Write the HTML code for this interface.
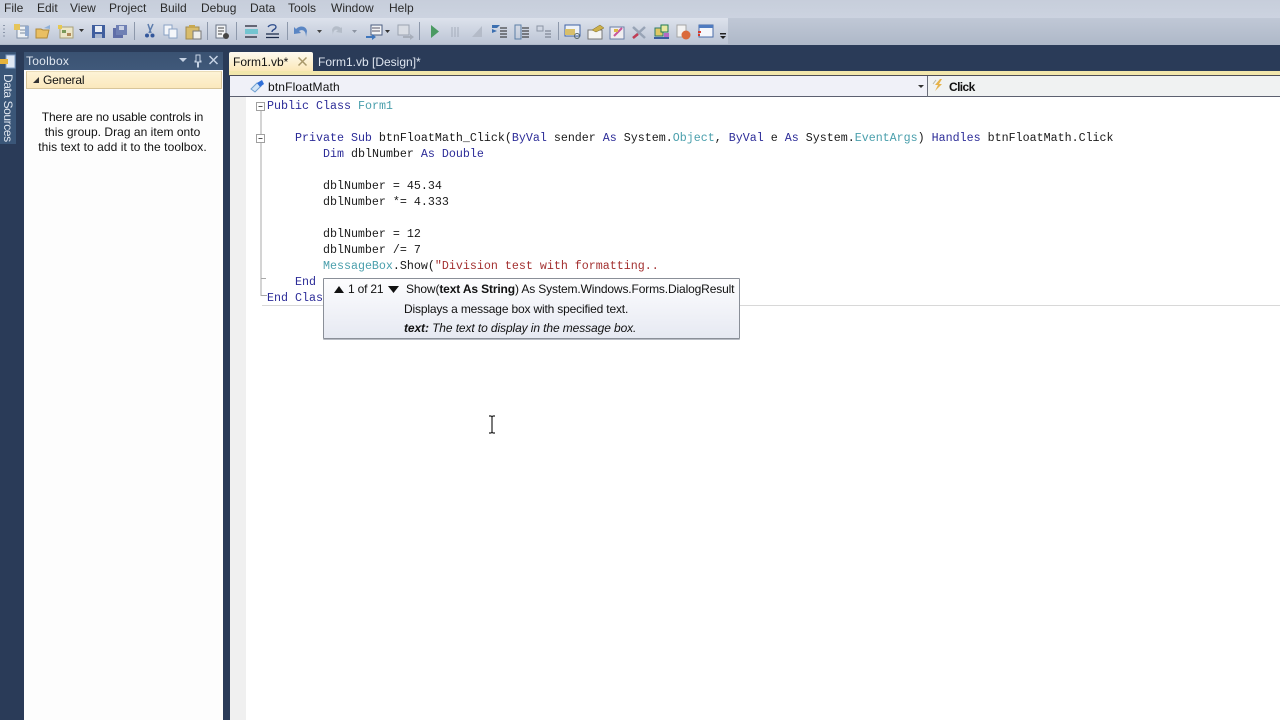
<!DOCTYPE html>
<html><head><meta charset="utf-8">
<style>
html,body{margin:0;padding:0}
body{width:1280px;height:720px;overflow:hidden;position:relative;background:#2a3b58;font-family:"Liberation Sans",sans-serif;font-size:12px;color:#111}
.a{position:absolute;white-space:nowrap}
#menu{left:0;top:0;width:1280px;height:18px;background:linear-gradient(#c7cedb,#ccd3e0)}
#tbrow{left:0;top:18px;width:1280px;height:27px;background:linear-gradient(#c0c8d6,#aeb8c8)}
#tb{left:0;top:18px;width:728px;height:26px;background:linear-gradient(#dde2ec,#bcc5d5)}
.m{top:1px;font-size:12px;color:#2a2a2a;line-height:14px}
.sep{top:22px;width:1px;height:18px;background:#8d98ab}
svg{position:absolute;overflow:visible}
#code{left:267px;top:98px;font:11.67px/16px "Liberation Mono",monospace;color:#1a1a1a;white-space:pre}
.k{color:#2c2c98}.t{color:#4a9fac}.s{color:#a33030}
</style></head><body>
<div class="a" id="menu"></div>
<div class="a" id="tbrow"></div>
<div class="a" id="tb"></div>
<div class="a m" style="left:4px">File</div>
<div class="a m" style="left:37px">Edit</div>
<div class="a m" style="left:70px">View</div>
<div class="a m" style="left:109px">Project</div>
<div class="a m" style="left:160px">Build</div>
<div class="a m" style="left:201px">Debug</div>
<div class="a m" style="left:250px">Data</div>
<div class="a m" style="left:288px">Tools</div>
<div class="a m" style="left:331px">Window</div>
<div class="a m" style="left:389px">Help</div>

<svg style="left:0;top:18px" width="728" height="26" viewBox="0 18 728 26">
<path d="M4 25v1M4 28.500v1M4 32v1M4 35.500v1" stroke="#6d7a90" stroke-width="1.400"/>
<rect x="17" y="26" width="11" height="12" fill="#eef1f4" stroke="#7f90a8"/><path d="M20 30h6M20 33h6" stroke="#7a8aa0"/><rect x="14" y="24" width="6" height="6" fill="#e5c45a"/><rect x="25" y="26" width="4" height="10" fill="#8fa9cf"/>
<path d="M36 29h5l2 1h6l-2 8H36z" fill="#e9bf62" stroke="#b08a3a"/><path d="M44 28l6-3v4z" fill="#8fb0d8"/>
<rect x="60" y="27" width="13" height="11" fill="#ece6c8" stroke="#a8a078"/><rect x="62" y="30" width="4" height="3" fill="#7a9a5a"/><rect x="67" y="33" width="4" height="3" fill="#b08a5a"/><rect x="58" y="25" width="4" height="4" fill="#e6c850"/>
<path d="M79 29h5l-2.500 3z" fill="#333"/>
<rect x="92" y="25" width="13" height="13" fill="#3f5e9e"/><rect x="95" y="26" width="7" height="6" fill="#e8edf5"/><rect x="95" y="34" width="7" height="4" fill="#aab8d0"/>
<rect x="113" y="28" width="10" height="10" fill="#5f6ea8"/><rect x="116" y="25" width="11" height="10" fill="#6f80b4"/><rect x="119" y="26" width="5" height="4" fill="#c8d0e4"/>
<path d="M148 24l3 9M153 24l-4 9" stroke="#5c7cac" stroke-width="1.500"/><circle cx="147" cy="35.500" r="2" fill="#34589c"/><circle cx="152.500" cy="35.500" r="2" fill="#34589c"/>
<rect x="164" y="25" width="8" height="10" fill="#f4f6fa" stroke="#8aa2c4"/><rect x="169" y="29" width="8" height="9" fill="#f4f6fa" stroke="#8aa2c4"/>
<rect x="186" y="27" width="13" height="12" fill="#d8bc6c" stroke="#a08a50"/><rect x="193" y="31" width="8" height="8" fill="#eeeeea" stroke="#777"/><rect x="189" y="25" width="6" height="3" fill="#c8a850"/>
<rect x="216" y="25" width="10" height="13" fill="#f2f4f6" stroke="#6a7486"/><path d="M218 28h6M218 31h6M218 34h4" stroke="#444"/><circle cx="226" cy="36" r="3" fill="#444"/>
<path d="M245 26h12M245 37h12" stroke="#223" stroke-width="1.300"/><path d="M245 29h13v5h-13z" fill="#5cc0cc" opacity=".8"/>
<path d="M268 27c2-3 8-3 8 0 0 3-4 2-4 5" fill="none" stroke="#2a4a8a" stroke-width="1.300"/><path d="M266 34h13M266 37.500h13" stroke="#1a2a48" stroke-width="1.300"/>
<path d="M296 29c4-4 10-3 11 2l-1 6c0-7-4-8-7-6l2 2-7 1 0-7z" fill="#5a86c4"/>
<path d="M317 30h5l-2.500 3z" fill="#444"/>
<path d="M341 28c-4-3-8-2-9 2l1 5c0-5 3-6 5-5l-2 2 6 1 0-6z" fill="#b4bcc8"/>
<path d="M352 30h5l-2.500 3z" fill="#8c94a2"/>
<rect x="371" y="25" width="11" height="10" fill="#f2f3f5" stroke="#4a5c80"/><path d="M372 28h8M372 31h8" stroke="#556"/><path d="M366 36h6v-2l4 3-4 3v-2h-6z" fill="#3f76bc"/>
<path d="M385 30h5l-2.500 3z" fill="#333"/>
<rect x="398" y="25" width="11" height="10" fill="#d9dde4" stroke="#9ba3b0"/><path d="M403 36h7v-2l4 3-4 3v-2h-7z" fill="#a7aeba"/>
<path d="M431 25v13l8-6.500z" fill="#4a9a62"/>
<path d="M452 27v10M455 27v10M458 27v10" stroke="#a4acba"/>
<path d="M482 26v11h-10z" fill="#b4bbc8"/>
<path d="M492 25h8l-3 3h-5zM492 29l5 2-5 2z" fill="#3c6fb0"/><path d="M500 28h7M500 31h7M500 34h7M500 37h7" stroke="#222"/>
<path d="M515 25h6v14h-6z" fill="none" stroke="#5b7ea6"/><path d="M522 28h7M522 31h7M522 34h7M522 37h7" stroke="#222"/>
<path d="M537 26h6v5h-6z" fill="none" stroke="#8b94a4"/><path d="M545 31h6M545 34h6M545 37h6" stroke="#6c7483"/>
<rect x="565" y="25" width="15" height="11" fill="#eef2f8" stroke="#3f62a4"/><rect x="565" y="29" width="10" height="6" fill="#d8bf6a"/><circle cx="577" cy="36" r="2.500" fill="none" stroke="#566"/>
<rect x="588" y="30" width="14" height="9" fill="#f4f4f4" stroke="#777"/><path d="M592 30l8-5 4 3-8 4z" fill="#cdb04a" stroke="#7a6a2a" stroke-width=".5"/>
<rect x="610" y="27" width="14" height="12" fill="#f0eef0" stroke="#6a7fa8"/><path d="M614 36l8-8" stroke="#c8569a" stroke-width="2"/><rect x="614" y="29" width="4" height="3" fill="#dcb84a"/>
<path d="M633 27l12 11M645 27l-12 11" stroke="#98a4b6" stroke-width="2.500"/><path d="M633 38l5-4" stroke="#c23d55" stroke-width="2.500"/>
<rect x="655" y="28" width="8" height="8" fill="#dfc864" stroke="#2c7a6a"/><rect x="661" y="25" width="7" height="7" fill="#e8e8a0" stroke="#1f7a50"/><rect x="664" y="33" width="5" height="4" fill="#b66bc4"/><rect x="654" y="37" width="15" height="2" fill="#3a5ea0"/>
<rect x="677" y="25" width="9" height="12" fill="#f3f3f3" stroke="#a5a5a5"/><circle cx="686" cy="35" r="4.500" fill="#da6a3c"/>
<rect x="699" y="25" width="14" height="12" fill="#f4f6fb" stroke="#4a6ca8"/><rect x="699" y="25" width="14" height="3" fill="#4f7bc0"/><path d="M698 32h3M698 35h2" stroke="#d63a2a" stroke-width="2"/>
<rect x="720" y="33" width="6" height="1.500" fill="#222"/><path d="M720 36h6l-3 3z" fill="#222"/>
</svg>
<div class="a sep" style="left:134px"></div><div class="a sep" style="left:207px"></div><div class="a sep" style="left:236px"></div><div class="a sep" style="left:287px"></div><div class="a sep" style="left:419px"></div><div class="a sep" style="left:558px"></div>

<!-- left strip -->
<div class="a" style="left:0;top:52px;width:16px;height:92px;background:#3a5678"></div>
<svg style="left:0;top:54px" width="16" height="16"><rect x="6" y="1" width="9" height="13" fill="#dfe8f4" stroke="#7f9cc4"/><rect x="0" y="5" width="8" height="5" fill="#e6b33c"/></svg>
<div class="a" style="left:0;top:74px;width:15px;color:#dfe6f0;font-size:12px;line-height:15px;writing-mode:vertical-rl;letter-spacing:-.42px">Data Sources</div>

<!-- toolbox -->
<div class="a" style="left:24px;top:52px;width:199px;height:19px;background:linear-gradient(#3a5272,#40597a)"></div>
<div class="a" style="left:26px;top:54px;color:#dfe6f0;font-size:12px;line-height:15px;letter-spacing:.25px">Toolbox</div>
<svg style="left:175px;top:52px" width="48" height="18">
<path d="M4 6h8l-4 4z" fill="#c5d2e4"/>
<path d="M21 3h4v6h1v1h-2.500v5h-1v-5H20V9h1z" fill="none" stroke="#c5d2e4"/>
<path d="M34.500 4l8 8M42.500 4l-8 8" stroke="#c5d2e4" stroke-width="1.500"/>
</svg>
<div class="a" style="left:24px;top:70px;width:199px;height:650px;background:#fdfdfd"></div>
<div class="a" style="left:26px;top:71px;width:194px;height:16px;background:linear-gradient(#fdf3d6,#fbe8bd);border:1px solid #d8c59a;border-top-color:#eadcb8"></div>
<svg style="left:33px;top:76px" width="8" height="8"><path d="M6 1v6H0z" fill="#333"/></svg>
<div class="a" style="left:43px;top:73px;font-size:12px;line-height:14px;color:#111;letter-spacing:-.2px">General</div>
<div class="a" style="left:24px;top:110px;width:197px;text-align:center;font-size:12px;line-height:15px;color:#111"><span style="letter-spacing:-.13px">There are no usable controls in</span><br><span style="letter-spacing:.03px">this group. Drag an item onto</span><br><span style="letter-spacing:.07px">this text to add it to the toolbox.</span></div>

<!-- doc -->
<div class="a" style="left:229px;top:52px;width:84px;height:20px;background:linear-gradient(#fdfaf0,#fbe7b4);border-radius:2px 2px 0 0"></div>
<div class="a" style="left:233px;top:55px;font-size:12px;line-height:15px;color:#111">Form1.vb*</div>
<svg style="left:297px;top:56px" width="11" height="11"><path d="M1.500 1.500l8 8M9.500 1.500l-8 8" stroke="#a8986a" stroke-width="1.500"/></svg>
<div class="a" style="left:318px;top:55px;font-size:12px;line-height:15px;color:#dfe6f0">Form1.vb [Design]*</div>
<div class="a" style="left:229px;top:71px;width:1051px;height:4px;background:#f2e7ac"></div>
<div class="a" style="left:229px;top:75px;width:1051px;height:1px;background:#4e4e58"></div>
<div class="a" style="left:230px;top:76px;width:1050px;height:21px;background:#f0f1f8"></div>
<div class="a" style="left:230px;top:96px;width:1050px;height:1px;background:#5c6070"></div>
<div class="a" style="left:927px;top:76px;width:1px;height:21px;background:#6a6e7a"></div>
<div class="a" style="left:928px;top:76px;width:352px;height:20px;background:#f0f2f2"></div>
<svg style="left:250px;top:79px" width="16" height="15"><path d="M1 10l6-6 4 3-6 6z" fill="#d2e4f6" stroke="#6f9fd0"/><path d="M7 4l5-3 2 4-4 3z" fill="#2f6fd8"/></svg>
<div class="a" style="left:268px;top:80px;font-size:12px;line-height:15px;color:#111;letter-spacing:.15px">btnFloatMath</div>
<svg style="left:918px;top:85px" width="6" height="4"><path d="M0 0h6L3 3z" fill="#333"/></svg>
<svg style="left:932px;top:79px" width="12" height="14"><path d="M8 0L3 6h3l-3 6 7-7H7l3-5z" fill="#e6b34a"/><path d="M4 1l-3 4" stroke="#b9b9a6"/></svg>
<div class="a" style="left:949px;top:80px;font-size:12px;font-weight:bold;line-height:15px;color:#111;letter-spacing:-.6px">Click</div>

<!-- editor -->
<div class="a" style="left:230px;top:97px;width:1050px;height:623px;background:#fff"></div>
<div class="a" style="left:230px;top:97px;width:16px;height:623px;background:#f0f0f0"></div>
<svg style="left:255px;top:98px" width="30" height="210">
<path d="M6 13V197.500h6" fill="none" stroke="#a8a8a8"/>
<path d="M6 180.500h5" stroke="#a8a8a8"/>
<rect x="1.500" y="4.500" width="8" height="8" fill="#fff" stroke="#a0a0a0"/><path d="M3.500 8.500h4" stroke="#555"/>
<rect x="1.500" y="36.500" width="8" height="8" fill="#fff" stroke="#a0a0a0"/><path d="M3.500 40.500h4" stroke="#555"/>
</svg>
<div class="a" style="left:262px;top:305px;width:1018px;height:1px;background:#d8d8d8"></div>
<div class="a" id="code"><span class="k">Public Class</span> <span class="t">Form1</span>

    <span class="k">Private Sub</span> btnFloatMath_Click(<span class="k">ByVal</span> sender <span class="k">As</span> System.<span class="t">Object</span>, <span class="k">ByVal</span> e <span class="k">As</span> System.<span class="t">EventArgs</span>) <span class="k">Handles</span> btnFloatMath.Click
        <span class="k">Dim</span> dblNumber <span class="k">As Double</span>

        dblNumber = 45.34
        dblNumber *= 4.333

        dblNumber = 12
        dblNumber /= 7
        <span class="t">MessageBox</span>.Show(<span class="s">"Division test with formatting..</span>
    <span class="k">End</span>
<span class="k">End Clas</span></div>

<!-- tooltip -->
<div class="a" style="left:323px;top:278px;width:415px;height:59px;background:linear-gradient(#fdfdfe,#e6e9f2);border:1px solid #8a8f98;border-radius:1px;box-shadow:0 1px 0 #b8bcc4"></div>
<svg style="left:334px;top:284px" width="66" height="10"><path d="M0 9h10L5 2z" fill="#111"/><path d="M54 2h11l-5.500 7z" fill="#111"/></svg>
<div class="a" style="left:348px;top:282px;font-size:12px;line-height:15px;color:#111;letter-spacing:-.2px">1 of 21</div>
<div class="a" style="left:406px;top:282px;font-size:12px;line-height:15px;color:#111;letter-spacing:-.14px">Show(<b>text As String</b>) As System.Windows.Forms.DialogResult</div>
<div class="a" style="left:404px;top:302px;font-size:12px;line-height:15px;color:#111;letter-spacing:-.17px">Displays a message box with specified text.</div>
<div class="a" style="left:404px;top:321px;font-size:12px;line-height:15px;color:#111;letter-spacing:-.1px"><b><i>text:</i></b> <i>The text to display in the message box.</i></div>

<!-- I-beam cursor -->
<svg style="left:488px;top:415px" width="9" height="19"><path d="M1 1h2l1 1 1-1h2M4 2v15M1 18h2l1-1 1 1h2" fill="none" stroke="#222" stroke-width="1.200"/></svg>
</body></html>
